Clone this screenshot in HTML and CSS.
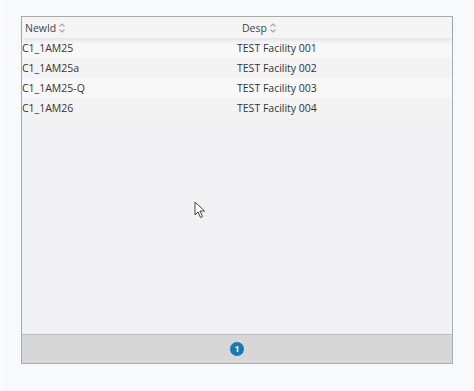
FILE: index.html
```html
<!DOCTYPE html>
<html lang="en">
<head>
    <meta charset="UTF-8">
    <title>Facility Grid</title>
    <link rel="stylesheet" href="styles.css">
</head>
<body>
    <div class="page">
        <div class="grid">
            <div class="grid-header">
                <div class="col col-id">NewId
                    <svg class="sort" width="6" height="10" viewBox="0 0 6 10"><path d="M0.5 3.5 L3 1 L5.5 3.5 M0.5 6.5 L3 9 L5.5 6.5" fill="none" stroke="#a5a5a5" stroke-width="1.1"/></svg>
                </div>
                <div class="col col-desp">Desp
                    <svg class="sort" width="6" height="10" viewBox="0 0 6 10"><path d="M0.5 3.5 L3 1 L5.5 3.5 M0.5 6.5 L3 9 L5.5 6.5" fill="none" stroke="#a5a5a5" stroke-width="1.1"/></svg>
                </div>
            </div>
            <div class="grid-body">
                <div class="row">
                    <div class="col col-id">C1_1AM25</div>
                    <div class="col col-desp">TEST Facility 001</div>
                </div>
                <div class="row alt">
                    <div class="col col-id">C1_1AM25a</div>
                    <div class="col col-desp">TEST Facility 002</div>
                </div>
                <div class="row">
                    <div class="col col-id">C1_1AM25-Q</div>
                    <div class="col col-desp">TEST Facility 003</div>
                </div>
                <div class="row alt">
                    <div class="col col-id">C1_1AM26</div>
                    <div class="col col-desp">TEST Facility 004</div>
                </div>
            </div>
            <div class="grid-footer">
                <span class="page-num">1</span>
            </div>
        </div>
        <svg class="cursor" width="12" height="18" viewBox="0 0 12 18">
            <path d="M1 1 L1 14 L4 11 L6.5 16.5 L8.5 15.5 L6 10 L10.5 10 Z" fill="#fff" stroke="#444" stroke-width="1"/>
        </svg>
    </div>
</body>
</html>
```
FILE: styles.css
```css
body {
    margin: 0;
    background-color: #f8f9fa;
    font-family: "Open Sans", Arial, sans-serif;
    font-size: 10.5px;
    color: #333;
}
.page {
    position: relative;
    width: 474px;
    height: 391px;
    padding: 16px 0 0 18px;
    box-sizing: border-box;
    border-left: 3px solid #fcfcfd;
}
.grid {
    width: 432px;
    height: 348px;
    border: 1px solid #ababab;
    box-sizing: border-box;
    display: flex;
    flex-direction: column;
    background-color: #f1f1f3;
}
.grid-header {
    display: flex;
    height: 21px;
    background-color: #f5f5f5;
    box-shadow: 0 3px 4px rgba(0, 0, 0, 0.08);
    position: relative;
}
.grid-header .col {
    display: flex;
    align-items: center;
    gap: 3px;
    padding-left: 3px;
    color: #444;
}
.col-id {
    width: 214px;
}
.col-desp {
    flex: 1;
}
.sort {
    margin-top: 1px;
}
.grid-body {
    flex: 1;
}
.row {
    display: flex;
    height: 20px;
    line-height: 20px;
    background-color: #f8f8f8;
}
.row.alt {
    background-color: #f3f3f4;
}
.row .col-desp {
    padding-left: 1px;
}
.grid-footer {
    height: 28px;
    background-color: #d7d7d7;
    border-top: 1px solid #bdbdbd;
    display: flex;
    align-items: center;
    justify-content: center;
}
.page-num {
    width: 14px;
    height: 14px;
    border-radius: 50%;
    background-color: #1a78b4;
    color: #fff;
    font-size: 8px;
    font-weight: bold;
    line-height: 14px;
    text-align: center;
}
.cursor {
    position: absolute;
    left: 191px;
    top: 201px;
}
```
